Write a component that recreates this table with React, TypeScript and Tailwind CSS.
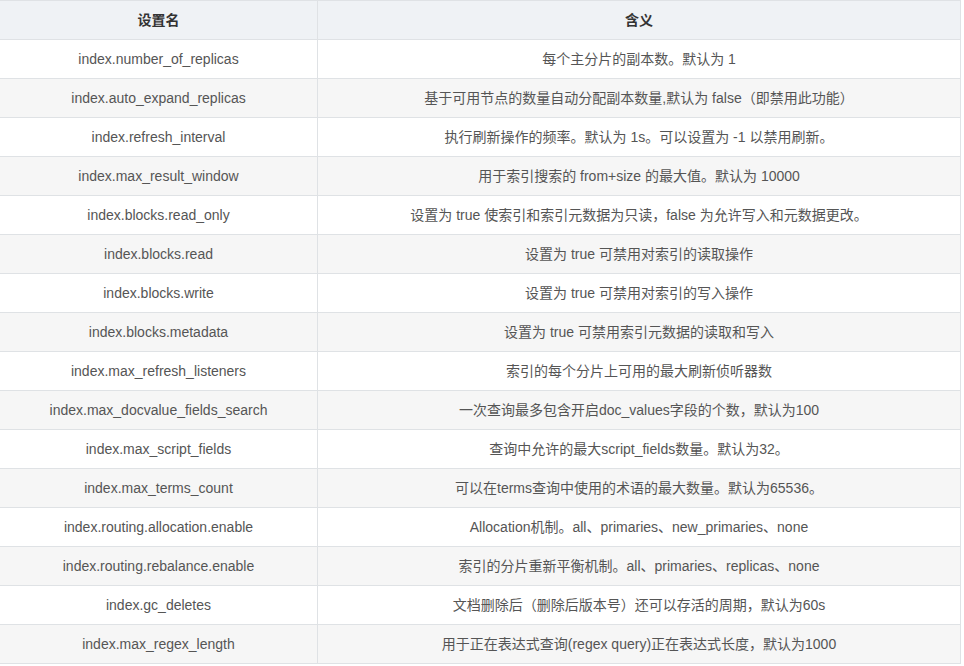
const rows: [string, string][] = [
  ["index.number_of_replicas", "每个主分片的副本数。默认为 1"],
  ["index.auto_expand_replicas", "基于可用节点的数量自动分配副本数量,默认为 false（即禁用此功能）"],
  ["index.refresh_interval", "执行刷新操作的频率。默认为 1s。可以设置为 -1 以禁用刷新。"],
  ["index.max_result_window", "用于索引搜索的 from+size 的最大值。默认为 10000"],
  ["index.blocks.read_only", "设置为 true 使索引和索引元数据为只读，false 为允许写入和元数据更改。"],
  ["index.blocks.read", "设置为 true 可禁用对索引的读取操作"],
  ["index.blocks.write", "设置为 true 可禁用对索引的写入操作"],
  ["index.blocks.metadata", "设置为 true 可禁用索引元数据的读取和写入"],
  ["index.max_refresh_listeners", "索引的每个分片上可用的最大刷新侦听器数"],
  ["index.max_docvalue_fields_search", "一次查询最多包含开启doc_values字段的个数，默认为100"],
  ["index.max_script_fields", "查询中允许的最大script_fields数量。默认为32。"],
  ["index.max_terms_count", "可以在terms查询中使用的术语的最大数量。默认为65536。"],
  ["index.routing.allocation.enable", "Allocation机制。all、primaries、new_primaries、none"],
  ["index.routing.rebalance.enable", "索引的分片重新平衡机制。all、primaries、replicas、none"],
  ["index.gc_deletes", "文档删除后（删除后版本号）还可以存活的周期，默认为60s"],
  ["index.max_regex_length", "用于正在表达式查询(regex query)正在表达式长度，默认为1000"],
];

export default function App() {
  return (
    <div className="h-[666px] w-[964px] overflow-hidden bg-white font-['Liberation_Sans','Noto_Sans_CJK_SC',sans-serif] text-[14px] text-[#555]">
      <table className="-ml-px w-[962px] table-fixed border-collapse">
        <colgroup>
          <col className="w-[318px]" />
          <col />
        </colgroup>
        <thead>
          <tr className="bg-[#eff2f5]">
            <th className="h-[39px] border border-[#dfe2e5] p-0 text-center font-bold text-[#333]">设置名</th>
            <th className="h-[39px] border border-[#dfe2e5] p-0 text-center font-bold text-[#333]">含义</th>
          </tr>
        </thead>
        <tbody>
          {rows.map(([name, desc], i) => (
            <tr key={name} className={i % 2 === 1 ? "bg-[#f6f6f6]" : "bg-white"}>
              <td className="h-[39px] border border-[#dfe2e5] p-0 text-center">{name}</td>
              <td className="h-[39px] border border-[#dfe2e5] p-0 text-center">{desc}</td>
            </tr>
          ))}
        </tbody>
      </table>
    </div>
  );
}
